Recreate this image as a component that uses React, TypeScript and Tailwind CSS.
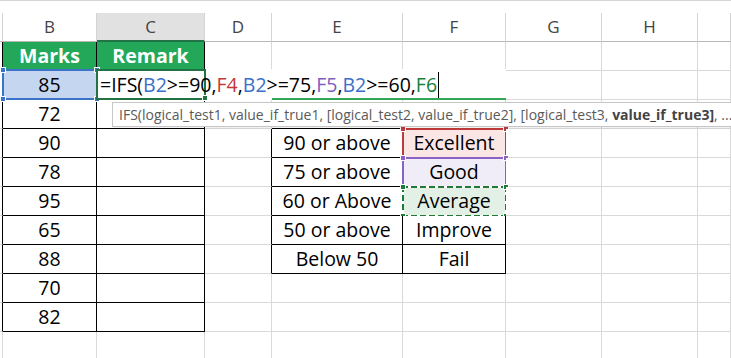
import * as React from "react";

const COLS = ["A", "B", "C", "D", "E", "F", "G", "H", "I"];

const marks = ["", "85", "72", "90", "78", "95", "65", "88", "70", "82", ""];
const bands: Record<number, [string, string]> = {
  4: ["90 or above", "Excellent"],
  5: ["75 or above", "Good"],
  6: ["60 or Above", "Average"],
  7: ["50 or above", "Improve"],
  8: ["Below 50", "Fail"],
};

const font = { fontFamily: '"Open Sans", "Noto Sans", sans-serif' };

function rightBorder(row: number, col: number) {
  if (col <= 2 && row >= 1 && row <= 10) return "border-r-black";
  if (col >= 3 && col <= 5 && row >= 4 && row <= 8) return "border-r-black";
  return "border-r-[#d9d9d9]";
}

function bottomBorder(row: number, col: number) {
  if ((col === 1 || col === 2) && row >= 1 && row <= 10) return "border-b-black";
  if ((col === 4 || col === 5) && row >= 3 && row <= 8) return "border-b-black";
  return "border-b-[#d9d9d9]";
}

// little square handles on the corners of a referenced range
function Corner({ className }: { className: string }) {
  return <span className={"absolute h-[6px] w-[6px] border border-white " + className} />;
}

function Highlight({ tone }: { tone: "red" | "purple" | "green" }) {
  if (tone === "green") {
    return (
      <div className="absolute left-[-1px] top-[-1px] h-[31px] w-[105px] border-2 border-[#1e7b35] bg-[#e3f0e5]">
        {/* marching ants */}
        <div className="absolute inset-x-[-2px] top-[-2px] h-[2px] bg-[repeating-linear-gradient(90deg,transparent_0_6px,#fff_6px_9px)]" />
        <div className="absolute inset-x-[-2px] bottom-[-2px] h-[2px] bg-[repeating-linear-gradient(90deg,transparent_0_6px,#fff_6px_9px)]" />
        <div className="absolute inset-y-[-2px] left-[-2px] w-[2px] bg-[repeating-linear-gradient(180deg,transparent_0_6px,#fff_6px_9px)]" />
        <div className="absolute inset-y-[-2px] right-[-2px] w-[2px] bg-[repeating-linear-gradient(180deg,transparent_0_6px,#fff_6px_9px)]" />
        <Corner className="left-[-4px] top-[-4px] bg-[#1e7b35]" />
        <Corner className="right-[-4px] top-[-4px] bg-[#1e7b35]" />
        <Corner className="bottom-[-4px] left-[-4px] bg-[#1e7b35]" />
        <Corner className="bottom-[-4px] right-[-4px] bg-[#1e7b35]" />
      </div>
    );
  }
  const c =
    tone === "red"
      ? { box: "border-[#c0393b] bg-[#fbe6e6]", dot: "bg-[#c0393b]" }
      : { box: "border-[#8a62c4] bg-[#f0edf8]", dot: "bg-[#8a62c4]" };
  return (
    <div className={"absolute left-[-1px] top-[-1px] h-[31px] w-[105px] border-2 " + c.box}>
      <Corner className={"left-[-4px] top-[-4px] " + c.dot} />
      <Corner className={"right-[-4px] top-[-4px] " + c.dot} />
    </div>
  );
}

function Cell({ row, col }: { row: number; col: number }) {
  const base =
    "relative flex h-[29px] items-center justify-center border-r border-b text-[19.5px] text-black " +
    rightBorder(row, col) +
    " " +
    bottomBorder(row, col);

  if (row === 1 && (col === 1 || col === 2)) {
    return (
      <div className={base + " bg-[#23a85a] font-bold text-white"}>
        {col === 1 ? "Marks" : "Remark"}
      </div>
    );
  }

  let text = "";
  let tone: "red" | "purple" | "green" | null = null;
  if (col === 1) text = marks[row - 1] ?? "";
  if (bands[row] && col === 4) text = bands[row][0];
  if (bands[row] && col === 5) {
    text = bands[row][1];
    if (row === 4) tone = "red";
    if (row === 5) tone = "purple";
    if (row === 6) tone = "green";
  }
  const selected = row === 2 && col === 1;

  return (
    <div className={base + (selected ? " bg-[#c5d7f0]" : " bg-white")}>
      {tone && <Highlight tone={tone} />}
      <span className="relative">{text}</span>
    </div>
  );
}

// in-cell edit box for C2, spilling over D2:F2
function Formula() {
  return (
    <div className="absolute left-[96px] top-[69px] flex h-[31px] w-[410px] bg-white">
      <div className="flex h-full w-[110px] shrink-0 items-center overflow-visible whitespace-nowrap border-2 border-[#217346] pl-[2px] text-[19.5px] text-black">
        <span>=IFS(</span>
        <span className="text-[#3a6fcb]">B2</span>
        <span>&gt;=90,</span>
        <span className="text-[#c2373c]">F4</span>
        <span>,</span>
        <span className="text-[#3a6fcb]">B2</span>
        <span>&gt;=75,</span>
        <span className="text-[#7f5cc0]">F5</span>
        <span>,</span>
        <span className="text-[#3a6fcb]">B2</span>
        <span>&gt;=60,</span>
        <span className="text-[#16813d]">F6</span>
        <span className="ml-px h-[26px] w-px shrink-0 bg-black" />
      </div>
      <div className="w-[66px] shrink-0" />
      <div className="flex-1 border-b-2 border-[#34a657]" />
      <span className="absolute left-[106px] top-[26px] h-[6px] w-[6px] border border-white bg-[#217346]" />
    </div>
  );
}

function Selection() {
  return (
    <div className="absolute left-[2px] top-[69px] h-[31px] w-[96px] border-2 border-[#3b73c9]">
      <Corner className="left-[-4px] top-[-4px] bg-[#3b73c9]" />
      <Corner className="right-[-4px] top-[-4px] bg-[#3b73c9]" />
      <Corner className="bottom-[-4px] left-[-4px] bg-[#3b73c9]" />
      <Corner className="bottom-[-4px] right-[-4px] bg-[#3b73c9]" />
    </div>
  );
}

function Tooltip() {
  return (
    <div className="absolute left-[112px] top-[102px] flex h-[25px] items-center whitespace-nowrap border border-[#c6c6c6] bg-white pl-[6px] pr-2 text-[14px] text-[#5a5a5a] shadow-[1px_1px_2px_rgba(0,0,0,0.08)]">
      <span>IFS(logical_test1, value_if_true1, [logical_test2, value_if_true2], [logical_test3,&nbsp;</span>
      <b className="font-bold text-[#444]">value_if_true3]</b>
      <span>, ...)</span>
    </div>
  );
}

export default function App() {
  const rows = Array.from({ length: 11 }, (_, i) => i + 1);
  return (
    <div className="relative h-[358px] w-[731px] overflow-hidden bg-white" style={font}>
      <div className="h-px bg-[#d4d4d4]" />
      <div className="h-[12px]" />
      <div className="grid grid-cols-[3px_94px_108px_67px_131px_103px_96px_96px_1fr]">
        {COLS.map((c, i) => (
          <div
            key={c}
            className={
              "flex h-[29px] items-center justify-center border-r border-r-[#d4d4d4] text-[17px] text-[#444] " +
              (i === 2
                ? "border-b-2 border-b-[#217346] bg-[#e1e1e1]"
                : "border-b border-b-[#b8b8b8] bg-white")
            }
          >
            {i === 0 || i === 8 ? "" : c}
          </div>
        ))}
        {rows.map((r) => COLS.map((_, c) => <Cell key={r + "-" + c} row={r} col={c} />))}
      </div>
      <Selection />
      <Formula />
      <Tooltip />
    </div>
  );
}
